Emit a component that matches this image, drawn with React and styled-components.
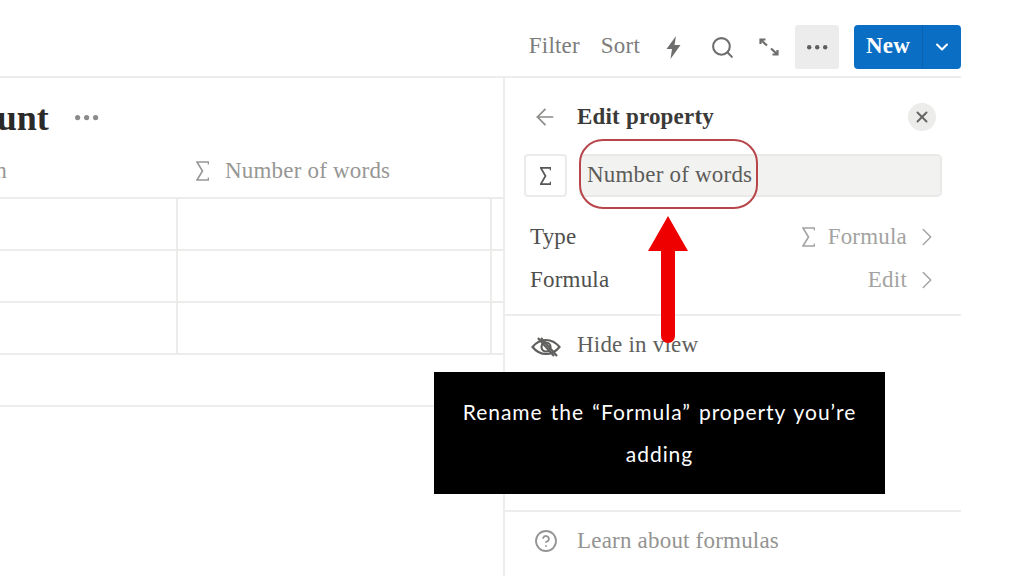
import React from 'react';
import styled, { createGlobalStyle } from 'styled-components';
import { ArrowLeft, ChevronDown, ChevronRight, CircleHelp, Search, X } from 'lucide-react';

const GlobalStyle = createGlobalStyle`
  html, body {
    margin: 0;
    padding: 0;
    background: #fff;
  }
  * {
    box-sizing: border-box;
  }
`;

const Page = styled.div`
  position: relative;
  width: 1024px;
  height: 576px;
  overflow: hidden;
  background: #fff;
  font-family: "Liberation Serif", serif;
  letter-spacing: 0.2px;
`;

const Frame = styled.div`
  width: 961px;
  height: 576px;
  display: flex;
  flex-direction: column;
`;

const Toolbar = styled.div`
  height: 78px;
  flex-shrink: 0;
  border-bottom: 2px solid #ededeb;
  display: flex;
  align-items: flex-start;
  justify-content: flex-end;
  padding-top: 25px;
`;

const ToolText = styled.div`
  height: 44px;
  line-height: 42px;
  font-size: 23px;
  color: #7c7c7a;
  margin-right: ${(p) => p.$gap}px;
`;

const ToolIcon = styled.div`
  width: ${(p) => p.$w}px;
  height: 44px;
  display: flex;
  align-items: center;
  justify-content: center;
  color: #6e6e6c;
  margin-right: ${(p) => p.$gap}px;
`;

const DotsButton = styled.div`
  width: 44px;
  height: 44px;
  border-radius: 3px;
  background: #ececec;
  margin-right: 15px;
  display: flex;
  align-items: center;
  justify-content: center;
  color: #5e5e5c;
`;

const NewButton = styled.div`
  width: 107px;
  height: 44px;
  border-radius: 4px;
  background: #0b6ec5;
  color: #fff;
  display: flex;
`;

const NewLabel = styled.div`
  width: 69px;
  text-align: center;
  line-height: 41px;
  font-size: 23px;
  font-weight: bold;
  border-right: 1px solid #0a62ae;
`;

const NewCaret = styled.div`
  flex: 1;
  display: flex;
  align-items: center;
  justify-content: center;
`;

const Body = styled.div`
  flex: 1;
  display: flex;
  min-height: 0;
`;

const Main = styled.div`
  width: 503px;
  flex-shrink: 0;
  overflow: hidden;
`;

const TitleRow = styled.div`
  height: 80px;
  display: flex;
  align-items: center;
  justify-content: flex-end;
  width: 100px;
`;

const Title = styled.div`
  font-size: 36px;
  font-weight: bold;
  color: #2b2a28;
  white-space: nowrap;
  letter-spacing: 0;
  margin-right: 25px;
`;

const TitleDots = styled.div`
  color: #8b8b89;
  display: flex;
  flex-shrink: 0;
  margin-right: 1px;
`;

const HeadRow = styled.div`
  height: 41px;
  display: grid;
  grid-template-columns: 177px 314px 1fr;
  border-bottom: 2px solid #ececea;
`;

const HeadCell = styled.div`
  display: flex;
  align-items: center;
  gap: 16px;
  padding: 0 0 13px 19px;
  font-size: 23px;
  color: #979795;
  overflow: hidden;
  white-space: nowrap;
`;

const ClippedHeadCell = styled(HeadCell)`
  justify-content: flex-end;
  padding: 0 170px 13px 0;
`;

const Row = styled.div`
  height: 52px;
  display: grid;
  grid-template-columns: 178px 314px 1fr;
  border-bottom: 2px solid #ececea;
`;

const Cell = styled.div`
  border-right: ${(p) => (p.$last ? 'none' : '2px solid #ececea')};
`;

const Panel = styled.div`
  flex: 1;
  border-left: 2px solid #ededeb;
  display: flex;
  flex-direction: column;
`;

const PanelHead = styled.div`
  height: 76px;
  display: flex;
  align-items: center;
  padding: 2px 25px 0 27px;
  color: #3f3f3d;
`;

const PanelTitle = styled.div`
  margin-left: 19px;
  flex: 1;
  font-size: 23px;
  font-weight: bold;
  color: #3a3a38;
`;

const CloseButton = styled.div`
  width: 28px;
  height: 28px;
  border-radius: 50%;
  background: #ececeb;
  color: #666664;
  display: flex;
  align-items: center;
  justify-content: center;
`;

const NameRow = styled.div`
  display: flex;
  gap: 12px;
  padding: 0 19px;
  height: 43px;
`;

const SigmaBox = styled.div`
  width: 43px;
  flex-shrink: 0;
  border: 2px solid #ebebe9;
  border-radius: 4px;
  display: flex;
  align-items: center;
  justify-content: center;
  color: #565654;
`;

const NameInput = styled.div`
  flex: 1;
  background: #f2f2f0;
  border: 2px solid #e9e9e7;
  border-radius: 5px;
  padding-left: 6px;
  line-height: 37px;
  font-size: 23px;
  color: #5c5c5a;
`;

const PropRows = styled.div`
  padding: 18px 19px 13px 25px;
  border-bottom: 2px solid #ededeb;
`;

const PropRow = styled.div`
  height: 43px;
  display: flex;
  align-items: center;
  justify-content: space-between;
  font-size: 23px;
  color: #4f4f4d;
`;

const PropValue = styled.div`
  display: flex;
  align-items: center;
  gap: 5px;
  color: #a3a3a1;

  svg:first-child:not(:last-child) {
    margin-right: 8px;
  }
`;

const HideRow = styled.div`
  height: 196px;
  padding: 10px 24px 0 26px;
  border-bottom: 2px solid #ededeb;
  display: flex;
  align-items: flex-start;
  gap: 16px;
  font-size: 23px;
  color: #5f5f5d;
  line-height: 38px;
`;

const EyeWrap = styled.div`
  margin-top: 11px;
  display: flex;
  color: #5f5f5d;
`;

const LearnRow = styled.div`
  display: flex;
  align-items: center;
  gap: 19px;
  padding: 16px 0 0 29px;
  font-size: 23px;
  color: #949492;
`;

const Callout = styled.div`
  position: absolute;
  left: 579px;
  top: 139px;
  width: 179px;
  height: 70px;
  border: 2px solid #b7454a;
  border-radius: 24px;
`;

const ArrowMark = styled.svg`
  position: absolute;
  left: 646px;
  top: 214px;
`;

const Caption = styled.div`
  position: absolute;
  left: 434px;
  top: 372px;
  width: 451px;
  height: 122px;
  background: #000;
  color: #fff;
  font-family: "Lato", sans-serif;
  font-size: 21px;
  line-height: 42px;
  letter-spacing: 0.95px;
  word-spacing: 2px;
  text-align: center;
  padding: 19px 20px 0;
`;

const Dots = ({ r = 2.2, gap = 8 }) => (
  <svg width={gap * 2 + r * 2 + 2} height={r * 2 + 2}>
    <circle cx={r + 1} cy={r + 1} r={r} fill="currentColor" />
    <circle cx={r + 1 + gap} cy={r + 1} r={r} fill="currentColor" />
    <circle cx={r + 1 + gap * 2} cy={r + 1} r={r} fill="currentColor" />
  </svg>
);

const SigmaIcon = ({ w = 13, h = 20, stroke = 1.6 }) => (
  <svg width={w} height={h} viewBox="0 0 13 20" preserveAspectRatio="none" fill="none" stroke="currentColor" strokeWidth={stroke}>
    <path d="M12.500 3.500V1H1L6.500 10L1 19H12.500V16.500" />
  </svg>
);

const BoltIcon = () => (
  <svg width="15" height="23" viewBox="0 0 15 23" fill="currentColor">
    <path d="M10 0L0.5 13H6L4.5 23L14.5 9H8.5Z" />
  </svg>
);

const ExpandIcon = () => (
  <svg width="20" height="18" viewBox="0 0 20 18" fill="none" stroke="currentColor" strokeWidth="2.2">
    <path d="M1.500 6V1.500H6.500M1.500 1.500L8 7.500" />
    <path d="M18.500 12V16.500H13.500M18.500 16.500L12 10.500" />
  </svg>
);

const EyeOffIcon = () => (
  <svg width="30" height="20" viewBox="0 0 30 20" fill="none" stroke="currentColor" strokeWidth="2.2">
    <path d="M1.500 10C6 4.500 10.500 3 15 3C19.500 3 24 4.500 28.500 10C24 15.500 19.500 17 15 17C10.500 17 6 15.500 1.500 10Z" />
    <circle cx="15" cy="10" r="4.500" />
    <path d="M7 1L23 19" />
    <path d="M10 1L26 19" />
  </svg>
);

const Chevron = () => <ChevronRight size={30} strokeWidth={1.2} />;

const App = () => {
  return (
    <Page>
      <GlobalStyle />
      <Frame>
        <Toolbar>
          <ToolText $gap={21}>Filter</ToolText>
          <ToolText $gap={20}>Sort</ToolText>
          <ToolIcon $w={26} $gap={23}><BoltIcon /></ToolIcon>
          <ToolIcon $w={26} $gap={21}><Search size={25} strokeWidth={2} /></ToolIcon>
          <ToolIcon $w={26} $gap={13}><ExpandIcon /></ToolIcon>
          <DotsButton><Dots /></DotsButton>
          <NewButton>
            <NewLabel>New</NewLabel>
            <NewCaret><ChevronDown size={20} strokeWidth={2.4} /></NewCaret>
          </NewButton>
        </Toolbar>
        <Body>
          <Main>
            <TitleRow>
              <Title>Word Count</Title>
              <TitleDots><Dots r={2.6} gap={9} /></TitleDots>
            </TitleRow>
            <HeadRow>
              <ClippedHeadCell>Length</ClippedHeadCell>
              <HeadCell><SigmaIcon />Number of words</HeadCell>
              <div />
            </HeadRow>
            {[0, 1, 2].map((i) => (
              <Row key={i}>
                <Cell />
                <Cell />
                <Cell $last />
              </Row>
            ))}
            <Row />
          </Main>
          <Panel>
            <PanelHead>
              <ArrowLeft size={26} strokeWidth={1.6} color="#8a8a88" />
              <PanelTitle>Edit property</PanelTitle>
              <CloseButton><X size={18} strokeWidth={2.6} /></CloseButton>
            </PanelHead>
            <NameRow>
              <SigmaBox><SigmaIcon w={11} h={18} stroke={2} /></SigmaBox>
              <NameInput>Number of words</NameInput>
            </NameRow>
            <PropRows>
              <PropRow>
                Type
                <PropValue><SigmaIcon />Formula<Chevron /></PropValue>
              </PropRow>
              <PropRow>
                Formula
                <PropValue>Edit<Chevron /></PropValue>
              </PropRow>
            </PropRows>
            <HideRow>
              <EyeWrap><EyeOffIcon /></EyeWrap>
              Hide in view
            </HideRow>
            <LearnRow>
              <CircleHelp size={24} strokeWidth={1.8} />
              Learn about formulas
            </LearnRow>
          </Panel>
        </Body>
      </Frame>
      <Callout />
      <ArrowMark width="44" height="130" viewBox="0 0 44 130">
        <path d="M22 2L42 37H29V122A7 7 0 0 1 15 122V37H2Z" fill="#ee0000" />
      </ArrowMark>
      <Caption>Rename the “Formula” property you’re adding</Caption>
    </Page>
  );
};

export default App;
